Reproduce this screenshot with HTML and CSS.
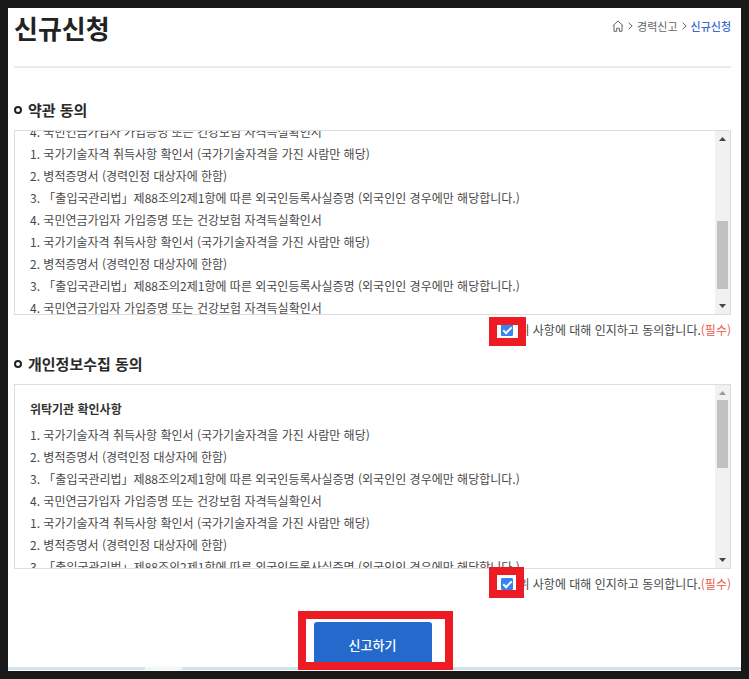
FILE: index.html
```html
<!DOCTYPE html>
<html lang="ko">
<head>
<meta charset="utf-8">
<title>신규신청</title>
<link rel="stylesheet" href="styles.css">
</head>
<body>
<main class="page">
  <header class="page-header">
    <h1>신규신청</h1>
    <nav class="breadcrumb">
      <a href="#" aria-label="홈"><svg class="home" viewBox="0 0 12 12"><path d="M0.7 6 6 1l5.300 5M2 5.200V11.300h2.700V8.200h2.600v3.100H10V5.200"/></svg></a>
      <svg class="chevron" viewBox="0 0 5 8"><path d="M.6.800 4.200 4 .6 7.200"/></svg>
      <a href="#">경력신고</a>
      <svg class="chevron" viewBox="0 0 5 8"><path d="M.6.800 4.200 4 .6 7.200"/></svg>
      <a href="#" class="current">신규신청</a>
    </nav>
  </header>

  <section class="agreement">
    <h2>약관 동의</h2>
    <div class="terms">
      <div class="terms-text" data-scroll="115">
        <h3>위탁기관 확인사항</h3>
        <p>1. 국가기술자격 취득사항 확인서 (국가기술자격을 가진 사람만 해당)</p>
        <p>2. 병적증명서 (경력인정 대상자에 한함)</p>
        <p>3. 「출입국관리법」제88조의2제1항에 따른 외국인등록사실증명 (외국인인 경우에만 해당합니다.)</p>
        <p>4. 국민연금가입자 가입증명 또는 건강보험 자격득실확인서</p>
        <p>1. 국가기술자격 취득사항 확인서 (국가기술자격을 가진 사람만 해당)</p>
        <p>2. 병적증명서 (경력인정 대상자에 한함)</p>
        <p>3. 「출입국관리법」제88조의2제1항에 따른 외국인등록사실증명 (외국인인 경우에만 해당합니다.)</p>
        <p>4. 국민연금가입자 가입증명 또는 건강보험 자격득실확인서</p>
        <p>1. 국가기술자격 취득사항 확인서 (국가기술자격을 가진 사람만 해당)</p>
        <p>2. 병적증명서 (경력인정 대상자에 한함)</p>
        <p>3. 「출입국관리법」제88조의2제1항에 따른 외국인등록사실증명 (외국인인 경우에만 해당합니다.)</p>
        <p>4. 국민연금가입자 가입증명 또는 건강보험 자격득실확인서</p>
      </div>
      <div class="scrollbar scrolled">
        <span class="arrow up"></span>
        <span class="track"><span class="thumb"></span></span>
        <span class="arrow down"></span>
      </div>
    </div>
    <div class="consent">
      <span class="tick"><input type="checkbox" id="agree-terms" checked><span class="mark mark-terms"></span></span>
      <label for="agree-terms">위 사항에 대해 인지하고 동의합니다.<em>(필수)</em></label>
    </div>
  </section>

  <section class="agreement">
    <h2>개인정보수집 동의</h2>
    <div class="terms">
      <div class="terms-text">
        <h3>위탁기관 확인사항</h3>
        <p>1. 국가기술자격 취득사항 확인서 (국가기술자격을 가진 사람만 해당)</p>
        <p>2. 병적증명서 (경력인정 대상자에 한함)</p>
        <p>3. 「출입국관리법」제88조의2제1항에 따른 외국인등록사실증명 (외국인인 경우에만 해당합니다.)</p>
        <p>4. 국민연금가입자 가입증명 또는 건강보험 자격득실확인서</p>
        <p>1. 국가기술자격 취득사항 확인서 (국가기술자격을 가진 사람만 해당)</p>
        <p>2. 병적증명서 (경력인정 대상자에 한함)</p>
        <p>3. 「출입국관리법」제88조의2제1항에 따른 외국인등록사실증명 (외국인인 경우에만 해당합니다.)</p>
      </div>
      <div class="scrollbar">
        <span class="arrow up disabled"></span>
        <span class="track"><span class="thumb"></span></span>
        <span class="arrow down"></span>
      </div>
    </div>
    <div class="consent">
      <span class="tick"><input type="checkbox" id="agree-privacy" checked><span class="mark mark-privacy"></span></span>
      <label for="agree-privacy">위 사항에 대해 인지하고 동의합니다.<em>(필수)</em></label>
    </div>
  </section>

  <div class="actions">
    <span class="submit-wrap">
      <button type="button">신고하기</button>
      <span class="mark mark-submit"></span>
    </span>
  </div>
  <div class="footer-strip"></div>
</main>
<script src="script.js"></script>
</body>
</html>
```
FILE: styles.css
```css
*,
*::before,
*::after {
  box-sizing: border-box;
}

body {
  margin: 0;
  padding: 8px;
  background: #191919;
  color: #484848;
  font-family: "Noto Sans CJK KR", sans-serif;
  font-size: 12px;
  line-height: 22px;
}

h1, h2, h3, p {
  margin: 0;
}

a {
  color: inherit;
  text-decoration: none;
}

.page {
  position: relative;
  padding: 0 10px 0 6px;
  background: #fff;
}

.page-header {
  display: flex;
  justify-content: space-between;
  align-items: flex-start;
  height: 60px;
  border-bottom: 2px solid #ebebeb;
}

h1 {
  color: #222;
  font-size: 26px;
  font-weight: 700;
  line-height: 40px;
}

.breadcrumb {
  display: flex;
  align-items: center;
  gap: 4px;
  padding-top: 7px;
  color: #666;
  font-size: 11px;
}

.breadcrumb a {
  display: flex;
}

.breadcrumb .current {
  color: #3c6ad0;
  font-weight: 500;
}

.breadcrumb svg {
  fill: none;
  stroke: #666;
  stroke-width: 1;
}

.home {
  width: 12px;
  height: 12px;
}

.chevron {
  width: 5px;
  height: 8px;
}

.agreement h2 {
  display: flex;
  align-items: center;
  gap: 6px;
  color: #2a2a2a;
  font-size: 15px;
  font-weight: 700;
  line-height: 24px;
}

.agreement h2::before {
  content: "";
  width: 8px;
  height: 8px;
  border: 2px solid #222;
  border-radius: 50%;
}

.agreement {
  padding-top: 30px;
}

.agreement + .agreement {
  padding-top: 11px;
}

.terms {
  display: flex;
  height: 185px;
  margin-top: 8px;
  border: 1px solid #ddd;
}

.terms-text {
  flex: 1;
  padding: 13px 15px 0;
  overflow-y: auto;
  scrollbar-width: none;
  white-space: nowrap;
}

.terms-text h3 {
  margin-bottom: 4px;
  color: #333;
  font-size: 12px;
  font-weight: 700;
}

.scrollbar {
  display: flex;
  flex-direction: column;
  align-items: center;
  width: 15px;
  background: #f1f1f1;
}

.arrow {
  width: 7px;
  height: 4px;
  margin: 6px 0 5px;
  background: #444;
  clip-path: polygon(50% 0, 100% 100%, 0 100%);
}

.arrow.down {
  margin: 5px 0 6px;
  clip-path: polygon(0 0, 100% 0, 50% 100%);
}

.arrow.disabled {
  background: #999;
}

.track {
  flex: 1;
}

.thumb {
  display: block;
  width: 11px;
  height: 68px;
  background: #c1c1c1;
}

.scrolled .track {
  padding-top: 75px;
}

.consent {
  display: flex;
  justify-content: flex-end;
  align-items: center;
  gap: 5px;
  padding-top: 4px;
}

.consent em {
  color: #e85a4f;
  font-style: normal;
}

.tick {
  display: flex;
  position: relative;
}

.tick input {
  display: grid;
  place-items: center;
  appearance: none;
  width: 12px;
  height: 12px;
  margin: 0;
  border: 1px solid #767676;
  border-radius: 1px;
  background: #fff;
}

.tick input:checked {
  border-color: #3584ef;
  background: #3584ef;
}

.tick input:checked::after {
  content: "";
  width: 9px;
  height: 5px;
  border: solid #fff;
  border-width: 0 0 2px 2px;
  transform: translateY(-1px) rotate(-45deg);
}

.mark {
  position: absolute;
  border: 8px solid #ed1c24;
  pointer-events: none;
}

.mark-terms {
  top: -7px;
  left: -12px;
  width: 37px;
  height: 29px;
}

.mark-privacy {
  top: -11px;
  left: -12px;
  width: 35px;
  height: 31px;
}

.actions {
  display: flex;
  justify-content: center;
  padding: 27px 0 3px;
}

.submit-wrap {
  position: relative;
  z-index: 1;
}

.actions button {
  display: block;
  width: 118px;
  height: 46px;
  border: 0;
  border-radius: 3px;
  background: #2469cc;
  color: #fff;
  font: 500 13px/22px "Noto Sans CJK KR", sans-serif;
}

.mark-submit {
  top: -11px;
  right: -21px;
  bottom: -2px;
  left: -16px;
}

.footer-strip {
  position: absolute;
  right: 0;
  bottom: 1px;
  left: 0;
  height: 3px;
  background: linear-gradient(90deg, #d0e5ef 137px, #f0f7fa 137px, #f0f7fa 174px, #d3e2ed 174px);
}
```
FILE: script.js
```
document.querySelectorAll("[data-scroll]").forEach(function (box) {
  box.scrollTop = Number(box.dataset.scroll);
});
```
